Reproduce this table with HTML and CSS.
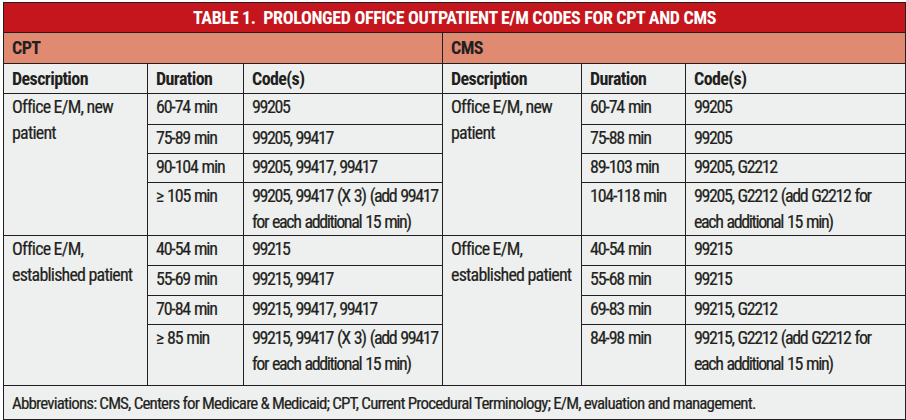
FILE: index.html
```html
<!DOCTYPE html>
<html lang="en">
<head>
<meta charset="utf-8">
<title>Table 1. Prolonged Office Outpatient E/M Codes for CPT and CMS</title>
<link rel="stylesheet" href="styles.css">
</head>
<body>
<table class="codes">
  <colgroup>
    <col class="c-desc1"><col class="c-dur1"><col class="c-code1">
    <col class="c-desc2"><col class="c-dur2"><col class="c-code2">
  </colgroup>
  <tr class="title-row"><th colspan="6">TABLE 1.&nbsp; PROLONGED OFFICE OUTPATIENT E/M CODES FOR CPT AND CMS</th></tr>
  <tr class="group-row"><th colspan="3">CPT</th><th colspan="3">CMS</th></tr>
  <tr class="head-row">
    <th>Description</th><th>Duration</th><th>Code(s)</th>
    <th>Description</th><th>Duration</th><th>Code(s)</th>
  </tr>
  <tr class="r31">
    <td rowspan="4">Office E/M, new<br>patient</td><td class="dur">60-74 min</td><td class="code">99205</td>
    <td rowspan="4">Office E/M, new<br>patient</td><td class="dur">60-74 min</td><td class="code">99205</td>
  </tr>
  <tr class="r29"><td class="dur">75-89 min</td><td class="code">99205, 99417</td><td class="dur">75-88 min</td><td class="code">99205</td></tr>
  <tr class="r29"><td class="dur">90-104 min</td><td class="code">99205, 99417, 99417</td><td class="dur">89-103 min</td><td class="code">99205, G2212</td></tr>
  <tr class="r52"><td class="dur">≥ 105 min</td><td class="code">99205, 99417 (X 3) (add 99417<br>for each additional 15 min)</td><td class="dur">104-118 min</td><td class="code">99205, G2212 (add G2212 for<br>each additional 15 min)</td></tr>
  <tr class="r30">
    <td rowspan="4">Office E/M,<br>established patient</td><td class="dur">40-54 min</td><td class="code">99215</td>
    <td rowspan="4">Office E/M,<br>established patient</td><td class="dur">40-54 min</td><td class="code">99215</td>
  </tr>
  <tr class="r30"><td class="dur">55-69 min</td><td class="code">99215, 99417</td><td class="dur">55-68 min</td><td class="code">99215</td></tr>
  <tr class="r29"><td class="dur">70-84 min</td><td class="code">99215, 99417, 99417</td><td class="dur">69-83 min</td><td class="code">99215, G2212</td></tr>
  <tr class="r61"><td class="dur">≥ 85 min</td><td class="code">99215, 99417 (X 3) (add 99417<br>for each additional 15 min)</td><td class="dur">84-98 min</td><td class="code">99215, G2212 (add G2212 for<br>each additional 15 min)</td></tr>
  <tr class="foot-row"><td colspan="6">Abbreviations: CMS, Centers for Medicare &amp; Medicaid; CPT, Current Procedural Terminology; E/M, evaluation and management.</td></tr>
</table>
</body>
</html>
```

FILE: styles.css
```css
html, body {
  margin: 0;
  padding: 0;
  background: #ffffff;
}

body {
  padding: 2px 0 0 3px;
}

.codes {
  border-collapse: collapse;
  table-layout: fixed;
  width: 902px;
  font-family: "Roboto Condensed", "Open Sans", "Liberation Sans", sans-serif;
  font-size: 18px;
  line-height: 26px;
  letter-spacing: -0.8px;
  color: #231f20;
  background: #eef0ef;
  border: 1px solid #231f20;
}

.c-desc1 { width: 144px; }
.c-dur1 { width: 96px; }
.c-code1 { width: 199px; }
.c-desc2 { width: 139px; }
.c-dur2 { width: 104px; }
.c-code2 { width: 220px; }

.codes th,
.codes td {
  border: 1px solid #231f20;
  padding: 0 8px;
  text-align: left;
  vertical-align: top;
  font-weight: normal;
  white-space: nowrap;
}

.codes td {
  -webkit-text-stroke: 0.2px #231f20;
}

.codes td.dur {
  letter-spacing: -1.2px;
  word-spacing: 1px;
}

.codes td.code {
  letter-spacing: -1.4px;
  word-spacing: 1.3px;
}

.title-row th {
  height: 29px;
  background: #c4161c;
  color: #ffffff;
  font-weight: bold;
  letter-spacing: -0.35px;
  text-align: center;
  vertical-align: middle;
}

.group-row th {
  height: 30px;
  background: #e08a71;
  font-weight: bold;
  letter-spacing: -0.6px;
  vertical-align: middle;
}

.head-row th {
  height: 29px;
  font-weight: bold;
  letter-spacing: -0.6px;
  vertical-align: middle;
}

.r29 { height: 29px; }
.r30 { height: 30px; }
.r31 { height: 31px; }
.r52 { height: 52px; }
.r61 { height: 61px; }

.foot-row td {
  height: 33px;
  font-size: 17px;
  letter-spacing: -0.85px;
  vertical-align: middle;
}
```
